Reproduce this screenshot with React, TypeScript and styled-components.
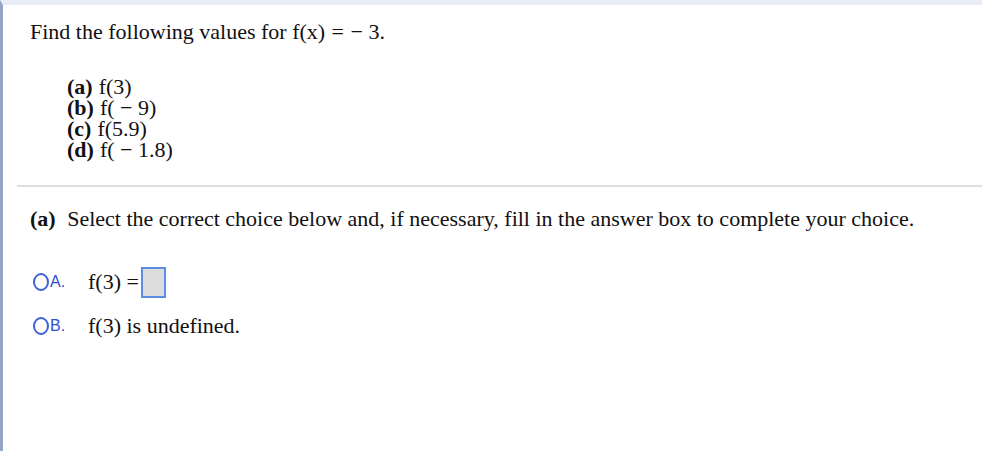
import React from "react";
import styled, { createGlobalStyle } from "styled-components";

const Global = createGlobalStyle`
  html, body { margin: 0; padding: 0; background: #ffffff; }
  body { font-family: "Liberation Serif", "Times New Roman", serif; color: #111; }
`;

const Page = styled.div`
  width: 982px;
  height: 451px;
  box-sizing: border-box;
  border-left: 3px solid #97a5c9;
  border-top: 5px solid #e8ecf5;
  background: #fff;
  overflow: hidden;
`;

const Question = styled.div`
  padding: 15px 0 0 27px;
  font-size: 22px;
  line-height: 24px;
`;

const Parts = styled.div`
  padding: 32px 0 0 64px;
  font-size: 22px;
  line-height: 21px;
  display: flex;
  flex-direction: column;
`;

const Label = styled.b`
  font-weight: bold;
  margin-right: 6px;
`;

const Divider = styled.hr`
  margin: 25px 0 0 14px;
  border: none;
  height: 2px;
  background: #dedede;
`;

const Instruction = styled.div`
  padding: 20px 0 0 27px;
  font-size: 22px;
  line-height: 24px;
`;

const Choices = styled.div`
  padding: 35px 0 0 30px;
  display: flex;
  flex-direction: column;
  gap: 12px;
`;

const Choice = styled.div`
  display: flex;
  align-items: center;
  height: 32px;
`;

const Radio = styled.span`
  width: 16px;
  height: 18px;
  border: 2px solid #3d62da;
  border-radius: 50%;
  box-sizing: border-box;
  display: inline-block;
`;

const Letter = styled.span`
  font-family: "Liberation Sans", Arial, sans-serif;
  font-size: 16px;
  color: #2d4fd0;
  margin-left: 1px;
  width: 38px;
`;

const Math = styled.span`
  font-size: 22px;
  display: flex;
  align-items: center;
`;

const Op = styled.span`
  margin: 0 1px;
`;

const AnswerBox = styled.span`
  display: inline-block;
  width: 25px;
  height: 31px;
  box-sizing: border-box;
  border: 2px solid #5b8de0;
  background: #dcdcdc;
  margin-left: 2px;
`;

export default function App() {
  return (
    <>
      <Global />
      <Page>
        <Question>
          Find the following values for f(x) <Op>=</Op> − 3.
        </Question>
        <Parts>
          <span><Label>(a)</Label>f(3)</span>
          <span><Label>(b)</Label>f( − 9)</span>
          <span><Label>(c)</Label>f(5.9)</span>
          <span><Label>(d)</Label>f( − 1.8)</span>
        </Parts>
        <Divider />
        <Instruction>
          <Label>(a)</Label> Select the correct choice below and, if necessary, fill in the answer box to complete your choice.
        </Instruction>
        <Choices>
          <Choice>
            <Radio />
            <Letter>A.</Letter>
            <Math>f(3) =<AnswerBox /></Math>
          </Choice>
          <Choice>
            <Radio />
            <Letter>B.</Letter>
            <Math>f(3) is undefined.</Math>
          </Choice>
        </Choices>
      </Page>
    </>
  );
}
